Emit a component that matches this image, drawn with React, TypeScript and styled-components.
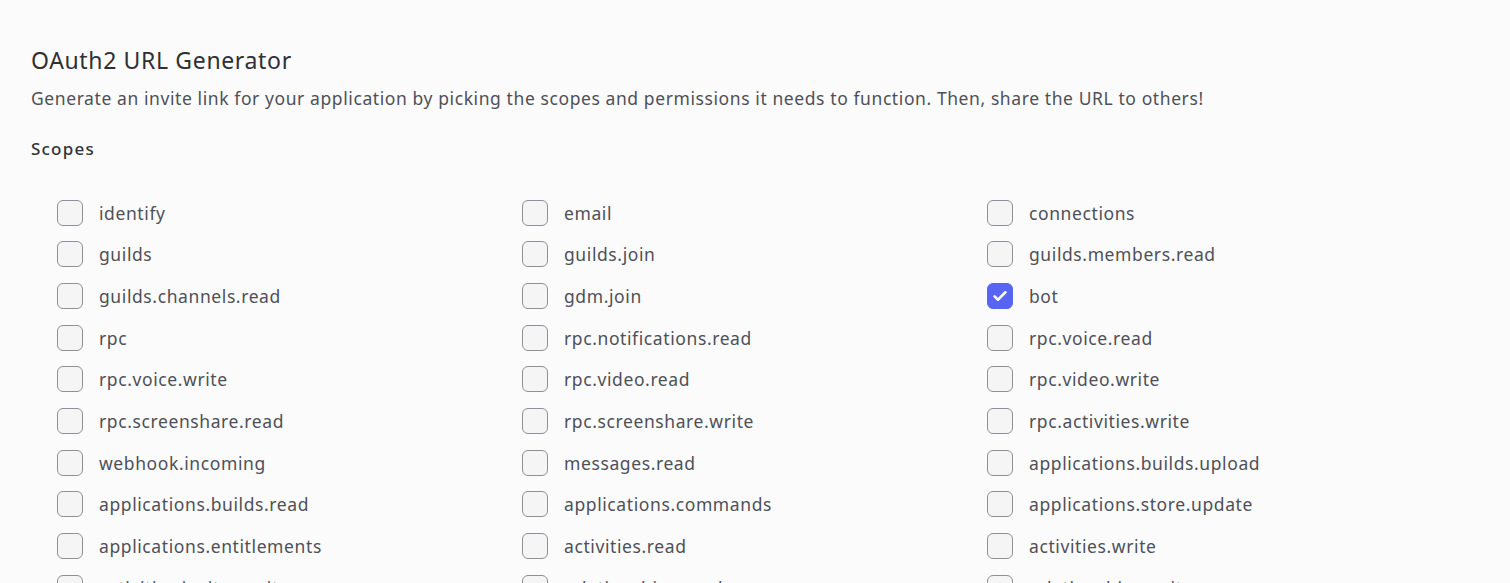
import styled, { createGlobalStyle } from 'styled-components';

const scopes: string[] = [
	'identify',
	'email',
	'connections',
	'guilds',
	'guilds.join',
	'guilds.members.read',
	'guilds.channels.read',
	'gdm.join',
	'bot',
	'rpc',
	'rpc.notifications.read',
	'rpc.voice.read',
	'rpc.voice.write',
	'rpc.video.read',
	'rpc.video.write',
	'rpc.screenshare.read',
	'rpc.screenshare.write',
	'rpc.activities.write',
	'webhook.incoming',
	'messages.read',
	'applications.builds.upload',
	'applications.builds.read',
	'applications.commands',
	'applications.store.update',
	'applications.entitlements',
	'activities.read',
	'activities.write',
	'activities.invites.write',
	'relationships.read',
	'relationships.write',
];

const checked = new Set(['bot']);

export default function App() {
	return (
		<>
			<GlobalStyle />
			<Page>
				<Title>OAuth2 URL Generator</Title>
				<Description>
					Generate an invite link for your application by picking the scopes and permissions it needs to
					function. Then, share the URL to others!
				</Description>
				<SectionLabel>Scopes</SectionLabel>
				<ScopeGrid>
					{scopes.map((scope) => (
						<ScopeRow key={scope}>
							<Box $checked={checked.has(scope)}>
								{checked.has(scope) && (
									<svg width='20' height='20' viewBox='0 0 24 24' fill='none'>
										<path
											d='M5.5 12.5l4 4L18.5 7.5'
											stroke='white'
											strokeWidth='3'
											strokeLinecap='round'
											strokeLinejoin='round'
										/>
									</svg>
								)}
							</Box>
							<ScopeName>{scope}</ScopeName>
						</ScopeRow>
					))}
				</ScopeGrid>
			</Page>
		</>
	);
}

const GlobalStyle = createGlobalStyle`
	html, body {
		margin: 0;
		background: #fbfbfb;
		overflow: hidden;
	}
	body {
		font-family: 'Noto Sans', 'Open Sans', sans-serif;
		color: #313338;
	}
`;

const Page = styled.div`
	padding: 44px 31px 0;
	height: 583px;
	box-sizing: border-box;
`;

const Title = styled.h1`
	margin: 0;
	font-size: 23px;
	font-weight: 400;
	letter-spacing: 0.65px;
	line-height: 32px;
	color: #2e3035;
`;

const Description = styled.p`
	margin: 10px 0 0;
	font-size: 17.5px;
	letter-spacing: 0.59px;
	line-height: 24px;
	color: #4e5058;
`;

const SectionLabel = styled.h3`
	margin: 29px 0 0;
	font-size: 17px;
	font-weight: 500;
	letter-spacing: 1.2px;
	line-height: 20px;
	color: #313338;
`;

const ScopeGrid = styled.div`
	display: grid;
	grid-template-columns: repeat(3, 465px);
	grid-auto-rows: 41.67px;
	margin-top: 33px;
	padding-left: 26px;
`;

const ScopeRow = styled.label`
	display: flex;
	align-items: center;
	gap: 16px;
`;

const Box = styled.span<{ $checked: boolean }>`
	width: 26px;
	height: 26px;
	box-sizing: border-box;
	border-radius: 6px;
	display: flex;
	align-items: center;
	justify-content: center;
	flex-shrink: 0;
	background: ${(p) => (p.$checked ? '#5865f2' : '#f5f5f6')};
	border: 1px solid ${(p) => (p.$checked ? '#5865f2' : '#8f9097')};
`;

const ScopeName = styled.span`
	font-size: 17.5px;
	letter-spacing: 0.6px;
	line-height: 24px;
	color: #4e5058;
`;
